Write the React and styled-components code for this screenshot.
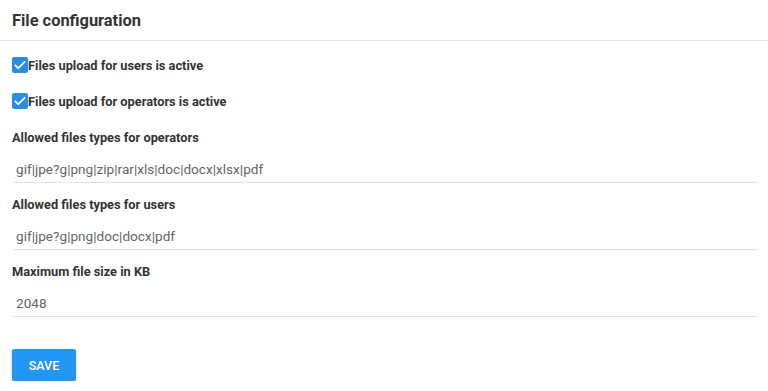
import React, { useState } from 'react';
import styled, { createGlobalStyle } from 'styled-components';

const GlobalStyle = createGlobalStyle`
  body {
    margin: 0;
    background: #fff;
    font-family: Roboto, "Liberation Sans", sans-serif;
    color: #333;
  }
`;

const Page = styled.div`
  width: 768px;
`;

const Header = styled.div`
  height: 41px;
  padding: 0 12px;
  display: flex;
  align-items: center;
  border-bottom: 1px solid #e2e2e2;
  box-sizing: border-box;
`;

const Title = styled.h2`
  margin: 0;
  font-size: 16.4px;
  font-weight: 700;
  color: #333;
`;

const Body = styled.form`
  padding: 13px 11px 0 12px;
  display: flex;
  flex-direction: column;
`;

const CheckGroup = styled.div`
  display: flex;
  flex-direction: column;
  gap: 14px;
  margin-bottom: 18px;
`;

const CheckRow = styled.label`
  display: flex;
  align-items: center;
  height: 22px;
  font-size: 12.8px;
  font-weight: 700;
  color: #333;
  cursor: pointer;
`;

const Box = styled.span`
  width: 16px;
  height: 16px;
  border-radius: 2px;
  background: ${p => (p.checked ? '#2b8ee6' : '#fff')};
  border: ${p => (p.checked ? 'none' : '1px solid #999')};
  display: inline-flex;
  align-items: center;
  justify-content: center;
  flex-shrink: 0;
`;

const HiddenInput = styled.input`
  display: none;
`;

const Field = styled.div`
  display: flex;
  flex-direction: column;
  margin-bottom: 14px;
`;

const FieldLabel = styled.label`
  font-size: 12.8px;
  font-weight: 700;
  color: #333;
  line-height: 16px;
`;

const TextInput = styled.input`
  border: none;
  border-bottom: 1px solid #e4e4e4;
  outline: none;
  font-family: inherit;
  font-size: 13.6px;
  color: #666;
  padding: 6px 4px 4px;
  margin-top: 8px;
  height: 18px;
  background: transparent;
`;

const SaveButton = styled.button`
  align-self: flex-start;
  margin-top: 18px;
  width: 64px;
  height: 32px;
  border: none;
  border-radius: 2px;
  background: #2196f3;
  color: #fff;
  font-family: inherit;
  font-size: 12.5px;
  font-weight: 500;
  text-transform: uppercase;
  box-shadow: 0 2px 3px rgba(0, 0, 0, 0.2);
  cursor: pointer;
`;

function Checkbox({ checked, onChange, children }) {
  return (
    <CheckRow>
      <HiddenInput type="checkbox" checked={checked} onChange={onChange} />
      <Box checked={checked}>
        {checked && (
          <svg width="14" height="14" viewBox="0 0 24 24">
            <path d="M4 12.5l5 5L20 6.5" fill="none" stroke="#fff" strokeWidth="3" strokeLinecap="round" strokeLinejoin="round" />
          </svg>
        )}
      </Box>
      {children}
    </CheckRow>
  );
}

export default function App() {
  const [users, setUsers] = useState(true);
  const [operators, setOperators] = useState(true);
  const [opTypes, setOpTypes] = useState('gif|jpe?g|png|zip|rar|xls|doc|docx|xlsx|pdf');
  const [userTypes, setUserTypes] = useState('gif|jpe?g|png|doc|docx|pdf');
  const [maxSize, setMaxSize] = useState('2048');

  return (
    <Page>
      <GlobalStyle />
      <Header>
        <Title>File configuration</Title>
      </Header>
      <Body onSubmit={e => e.preventDefault()}>
        <CheckGroup>
          <Checkbox checked={users} onChange={() => setUsers(!users)}>
            Files upload for users is active
          </Checkbox>
          <Checkbox checked={operators} onChange={() => setOperators(!operators)}>
            Files upload for operators is active
          </Checkbox>
        </CheckGroup>
        <Field>
          <FieldLabel>Allowed files types for operators</FieldLabel>
          <TextInput value={opTypes} onChange={e => setOpTypes(e.target.value)} />
        </Field>
        <Field>
          <FieldLabel>Allowed files types for users</FieldLabel>
          <TextInput value={userTypes} onChange={e => setUserTypes(e.target.value)} />
        </Field>
        <Field>
          <FieldLabel>Maximum file size in KB</FieldLabel>
          <TextInput value={maxSize} onChange={e => setMaxSize(e.target.value)} />
        </Field>
        <SaveButton type="submit">Save</SaveButton>
      </Body>
    </Page>
  );
}
